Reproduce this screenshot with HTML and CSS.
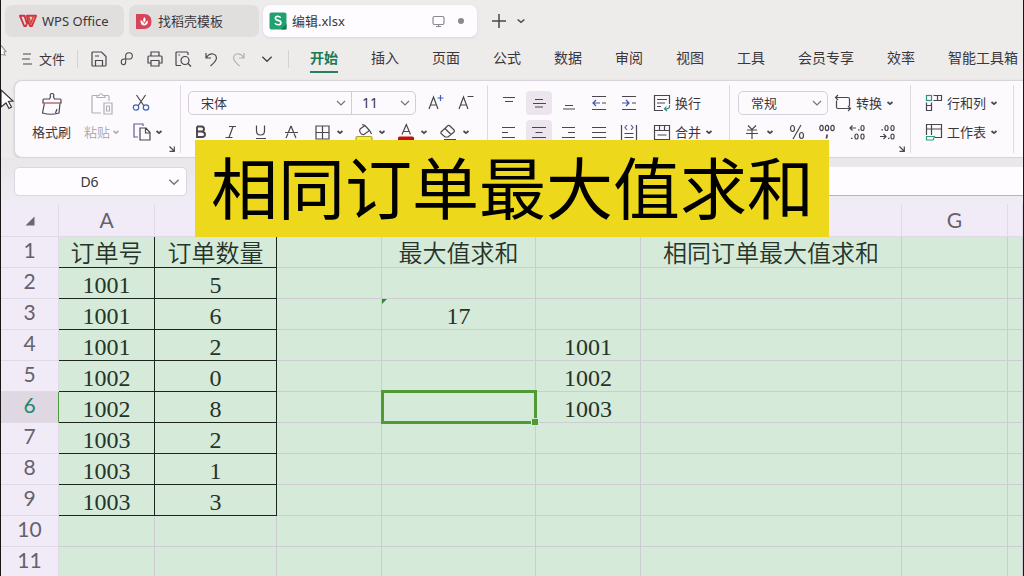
FILE: index.html
```html
<!DOCTYPE html>
<html lang="zh-CN">
<head>
<meta charset="utf-8">
<title>编辑.xlsx</title>
<link rel="stylesheet" href="styles.css">
</head>
<body>
<svg class="defs" aria-hidden="true">
  <symbol id="caret" viewBox="0 0 8 8"><path d="M1.5 3 L4 5.200 L6.5 3" stroke-width="1.7"/></symbol>
  <symbol id="chev" viewBox="0 0 12 12"><path d="M2 4 L6 8 L10 4"/></symbol>
  <symbol id="launch" viewBox="0 0 8 8"><path d="M1.5 1.5 L6 6 M6.3 1.5 V6.3 H1.5"/></symbol>
</svg>

<header class="tabs">
  <button class="tab tab-home"><svg width="18" height="14" viewBox="0 0 18 14"><path d="M1 1.8 H5.5 L7.8 9 L9 5.4 L7.8 1.8 H17 L13 12 H11 L9 7 L7 12 H5.2 Z" fill="none" stroke="#cf3341" stroke-width="1.9" stroke-linejoin="round"/><path d="M9.5 2 L11.8 9.5 L14.5 2" fill="none" stroke="#d9493b" stroke-width="1.7"/></svg><span>WPS Office</span></button>
  <button class="tab tab-store"><svg class="solid" width="16" height="17" viewBox="0 0 16 17"><path d="M0 1 H8 Q15.5 1 15.5 8.5 Q15.5 16 8 16 H0 Z" fill="#d8445a"/><path d="M8.500 4 Q6 6.500 8 9.500 Q11 8 8.500 4 M4.500 7 Q4 12.500 8.500 12.500 Q12 12 12 7.500 Q10 8 8.500 11 Q7 8 4.500 7" fill="#fff"/></svg><span>找稻壳模板</span></button>
  <button class="tab tab-file"><svg class="solid" width="18" height="18" viewBox="0 0 18 18"><rect x="0.500" y="0.500" width="17" height="17" rx="2" fill="#21a070"/><path d="M12 17.500 L17.500 12 V17.500 Z" fill="#12784f"/><path d="M11.700 5.800 Q10.500 4.300 8.800 4.300 Q6.400 4.400 6.400 6.300 Q6.500 8 9 8.400 Q11.900 8.900 11.900 10.800 Q11.700 12.700 9.200 12.700 Q7 12.700 5.900 11.100" fill="none" stroke="#fff" stroke-width="1.600"/></svg><span>编辑.xlsx</span>
    <svg class="screen" width="13" height="13" viewBox="0 0 13 13"><rect x="1" y="1.500" width="11" height="8" rx="1.500"/><path d="M6.500 9.500 V11.500 M4 11.500 H9"/></svg><i class="dot"></i></button>
  <button class="add" aria-label="新建"><svg width="16" height="16" viewBox="0 0 16 16"><path d="M8 1 V15 M1 8 H15" stroke-width="1.500"/></svg></button>
  <button class="add-more" aria-label="更多"><svg width="10" height="10" viewBox="0 0 8 8"><path d="M1.300 2.800 L4 5 L6.700 2.800"/></svg></button>
</header>

<nav class="menu">
  <button class="file"><svg width="12" height="14" viewBox="0 0 12 14"><path d="M2 2 H10 M1 7 H9 M2 12 H11"/></svg>文件</button>
  <div class="quick">
    <button aria-label="保存"><svg width="18" height="18" viewBox="0 0 18 18"><path d="M2 3 Q2 2 3 2 H11.500 L16 6.500 V15 Q16 16 15 16 H3 Q2 16 2 15 Z M5.500 16 V10.500 H12.500 V16 M5 6 H9"/></svg></button>
    <button aria-label="输出"><svg width="16" height="16" viewBox="0 0 18 18"><path d="M7.500 12.500 V5.500 Q7.500 2 11.300 2 Q15 2 15 5.500 Q15 9 11 9 H6 Q2.500 9 2.500 12.200 Q2.500 15.500 5 15.500 Q7.500 15.500 7.500 12.500"/></svg></button>
    <button aria-label="打印"><svg width="18" height="18" viewBox="0 0 18 18"><path d="M5 6 V2 H13 V6 M5 13 H2 V7 Q2 6 3 6 H15 Q16 6 16 7 V13 H13 M5 10.500 H13 V16 H5 Z"/></svg></button>
    <button aria-label="预览"><svg width="18" height="18" viewBox="0 0 18 18"><path d="M7 15.500 H3 Q2 15.500 2 14.500 V3 Q2 2 3 2 H13 Q14 2 14 3 V5 M4.500 5 H6"/><circle cx="11" cy="10.500" r="4"/><path d="M14 13.500 L17 16.500"/></svg></button>
    <button aria-label="撤销"><svg width="18" height="18" viewBox="0 0 18 18"><path d="M4 3 V8 H9 M4.500 7.500 Q7 3.500 11 4 Q15 5 14.300 9 Q14 11 8.500 16"/></svg></button>
    <button class="dim" aria-label="恢复"><svg width="18" height="18" viewBox="0 0 18 18"><path d="M14 3 V8 H9 M13.500 7.500 Q11 3.500 7 4 Q3 5 3.700 9 Q4 11 9.500 16"/></svg></button>
    <button aria-label="更多"><svg width="14" height="14" viewBox="0 0 12 12"><use href="#chev"/></svg></button>
  </div>
  <div class="ribbon-tabs">
    <button class="on">开始</button><button>插入</button><button>页面</button><button>公式</button><button>数据</button><button>审阅</button><button>视图</button><button>工具</button><button>会员专享</button><button>效率</button><button>智能工具箱</button>
  </div>
</nav>

<section class="ribbon">
  <div class="group clip">
    <button class="big"><svg width="24" height="24" viewBox="0 0 24 24"><path d="M3 8 Q3 7 4 7 H9.500 L10.500 5 Q9.500 1.500 12 1.500 Q14.500 1.500 13.500 5 L14.500 7 H20 Q21 7 21 8 V11 H3 Z M4.500 11 L2.500 21 Q11 23.500 19 21 L20 11 M15.500 21 L17 17"/><path d="M4 11 H20" stroke="#d98b8b"/></svg><span>格式刷</span></button>
    <button class="big dim"><svg width="24" height="24" viewBox="0 0 24 24"><path d="M7 3.500 H3 Q2 3.500 2 4.500 V20 Q2 21 3 21 H11 M15 3.500 H18 Q19 3.500 19 4.500 V9 M7 5.500 V3.500 H9 Q11 0 13 3.500 H15 V5.500 Z M14 11 H22 V22 H14 Z M16.500 14 H19.500 V19 H16.500 Z"/></svg><span>粘贴 <svg width="8" height="8"><use href="#caret"/></svg></span></button>
    <div class="stack">
      <button class="row" aria-label="剪切"><svg width="18" height="18" viewBox="0 0 18 18"><path d="M4.500 1 L12 12 M13.500 1 L6 12"/><g stroke="#3f62b5"><circle cx="4" cy="13.500" r="2.700"/><circle cx="14" cy="13.500" r="2.700"/></g></svg></button>
      <button class="row" aria-label="复制"><svg width="20" height="20" viewBox="0 0 20 20"><path d="M6 15 H2 V2 H11 V4" stroke="#5b5f9c"/><path d="M8 6 H14 L18 10.500 V18 H8 Z M13.500 6 V11 H18"/></svg><svg width="8" height="8"><use href="#caret"/></svg></button>
    </div>
    <svg class="launch" width="8" height="8"><use href="#launch"/></svg>
  </div>

  <div class="group font">
    <div class="line">
      <div class="combo"><label class="pick family"><select aria-label="字体"><option>宋体</option></select><svg width="12" height="12"><use href="#chev"/></svg></label><label class="pick size"><select aria-label="字号"><option>11</option></select><svg width="12" height="12"><use href="#chev"/></svg></label></div>
      <button class="ic" aria-label="增大字号"><svg width="18" height="18" viewBox="0 0 18 18"><path d="M2 15 L6.500 3 L11 15 M3.500 11 H9.500"/><path d="M13.500 1 V7 M10.500 4 H16.500" stroke="#3f62b5"/></svg></button>
      <button class="ic" aria-label="减小字号"><svg width="18" height="18" viewBox="0 0 18 18"><path d="M2 15 L6.500 3 L11 15 M3.500 11 H9.500 M10.500 2.500 H16.500"/></svg></button>
    </div>
    <div class="line">
      <button class="ic" aria-label="加粗"><svg width="18" height="18" viewBox="0 0 18 18"><path d="M5 3.500 H9.500 Q12 3.800 12 6 Q12 8.500 9.500 8.500 H5 M9.500 8.500 Q13 8.800 13 11.500 Q13 14 10 14 H5 V3.500" stroke-width="1.900"/></svg></button>
      <button class="ic" aria-label="倾斜"><svg width="18" height="18" viewBox="0 0 18 18"><path d="M7 3.500 H14 M3.500 14.500 H10.500 M11 3.500 L7 14.500"/></svg></button>
      <button class="ic" aria-label="下划线"><svg width="18" height="18" viewBox="0 0 18 18"><path d="M4.500 2.500 V8 Q4.500 12 8.500 12 Q12.500 12 12.500 8 V2.500 M4 15.500 H14"/></svg></button>
      <button class="ic" aria-label="删除线"><svg width="18" height="18" viewBox="0 0 18 18"><path d="M9 3 L6.500 9 M9 3 L11.500 9 M3 9.500 H16 M6 10.500 L4 15 M12 10.500 L14 15"/></svg></button>
      <button class="split" aria-label="边框"><svg width="18" height="18" viewBox="0 0 18 18"><path d="M3 3 H16 V16 H3 Z M9.500 3 V16 M3 9.500 H16"/></svg><svg width="8" height="8"><use href="#caret"/></svg></button>
      <button class="split" aria-label="填充颜色"><svg width="18" height="20" viewBox="0 0 18 20"><path d="M5 7 L10 3.500 L14.500 8.500 L9 12.500 Q7 13 5.500 11 Q4 9 5 7 M10 3.500 L7 2.500 M15 9 L16.500 12"/><rect x="1" y="14.500" width="16" height="5" rx="1.500" fill="#f6f03a" stroke="#a8a22e"/></svg><svg width="8" height="8"><use href="#caret"/></svg></button>
      <button class="split" aria-label="字体颜色"><svg width="18" height="20" viewBox="0 0 18 20"><path d="M5 12.500 L9.300 2.500 L13.500 12.500 M6.500 9.500 H12"/><rect x="1" y="14.500" width="16" height="5" rx="1.500" fill="#c4100f" stroke="none"/></svg><svg width="8" height="8"><use href="#caret"/></svg></button>
      <button class="split" aria-label="清除"><svg width="18" height="18" viewBox="0 0 18 18"><path d="M2 9 L9 2.500 Q10 2 11 3 L15 7 Q16 8 15 9 L9 14 H6 L2 10.500 Z M6 5.500 L12 11.500 M5 16.500 H17"/></svg><svg width="8" height="8"><use href="#caret"/></svg></button>
    </div>
  </div>

  <div class="group align">
    <div class="line">
      <button class="ic" aria-label="顶端对齐"><svg width="18" height="18" viewBox="0 0 18 18"><path d="M3 3.500 H15 M5 7.500 H13"/></svg></button>
      <button class="ic on" aria-label="垂直居中"><svg width="18" height="18" viewBox="0 0 18 18"><path d="M5 5.500 H13 M3 9.500 H16 M5 13 H13"/></svg></button>
      <button class="ic" aria-label="底端对齐"><svg width="18" height="18" viewBox="0 0 18 18"><path d="M5 11.500 H13 M3 15 H15"/></svg></button>
      <button class="ic" aria-label="减少缩进"><svg width="18" height="18" viewBox="0 0 18 18"><path d="M2 2.500 H16 M2 15.500 H16 M12 9 H16"/><path d="M10 9 H3 M6 6 L3 9 L6 12" stroke="#3f4fb5"/></svg></button>
      <button class="ic" aria-label="增加缩进"><svg width="18" height="18" viewBox="0 0 18 18"><path d="M2 2.500 H16 M2 15.500 H16 M12 9 H16"/><path d="M2 9 H9 M6 6 L9 9 L6 12" stroke="#3f4fb5"/></svg></button>
      <button class="text"><svg width="18" height="18" viewBox="0 0 18 18"><path d="M10 16.500 H1.500 V1.500 H16.500 V10 M4 5.500 H14 M4 9 H12 M4 12.500 H8"/><path d="M16.500 11 V13 Q16 15 12 15 M13.500 12.500 L11.500 15 L14 17" stroke="#3a8a80"/></svg>换行</button>
    </div>
    <div class="line">
      <button class="ic" aria-label="左对齐"><svg width="18" height="18" viewBox="0 0 18 18"><path d="M2 4.500 H15 M2 9.500 H8 M2 14.500 H15"/></svg></button>
      <button class="ic on" aria-label="居中"><svg width="18" height="18" viewBox="0 0 18 18"><path d="M2 4.500 H16 M5.500 9.500 H12.500 M2 14.500 H16"/></svg></button>
      <button class="ic" aria-label="右对齐"><svg width="18" height="18" viewBox="0 0 18 18"><path d="M2 4.500 H15 M8 9.500 H15 M2 14.500 H15"/></svg></button>
      <button class="ic" aria-label="两端对齐"><svg width="18" height="18" viewBox="0 0 18 18"><path d="M2 4.500 H16 M2 9.500 H16 M2 14.500 H16"/></svg></button>
      <button class="ic" aria-label="分散对齐"><svg width="18" height="18" viewBox="0 0 18 18"><path d="M1.500 2 V17 M16.500 2 V17 M4.500 10.500 H13.500 M4.500 14.500 H13.500"/><path d="M7 2 L5 4.500 L7 7 M11 2 L13 4.500 L11 7" stroke="#6a55a5"/></svg></button>
      <button class="text"><svg width="18" height="18" viewBox="0 0 18 18"><path d="M1.500 2.500 H16.500 V16.500 H1.500 Z M1.500 7.500 H16.500 M6.500 2.500 V7.500 M11.500 2.500 V7.500 M4.500 12 H13.500"/></svg>合并<svg width="8" height="8"><use href="#caret"/></svg></button>
    </div>
  </div>

  <div class="group number">
    <div class="line">
      <label class="pick format"><select aria-label="数字格式"><option>常规</option></select><svg width="12" height="12"><use href="#chev"/></svg></label>
      <button class="text"><svg width="18" height="18" viewBox="0 0 18 18"><path d="M4 1 L1.500 3.500 L4 6 M1.500 3.500 H14 Q15.500 3.500 15.500 5 V12 M2.500 6.500 V13 Q2.500 14.500 4 14.500 H16.500 M14 12 L16.500 14.500 L14 17"/></svg>转换<svg width="8" height="8"><use href="#caret"/></svg></button>
    </div>
    <div class="line">
      <button class="split money" aria-label="货币"><svg width="18" height="18" viewBox="0 0 18 18"><path d="M5 2.500 L9 6.500 L13 2.500 M4 7 H14 M3 10.500 H15 M9 7 V16"/></svg><svg width="8" height="8"><use href="#caret"/></svg></button>
      <button class="ic" aria-label="百分比"><svg width="18" height="18" viewBox="0 0 18 18"><ellipse cx="4.500" cy="5.500" rx="2" ry="3"/><ellipse cx="13.500" cy="12.500" rx="2" ry="3"/><path d="M13 2 L5 16"/></svg></button>
      <button class="ic" aria-label="千位分隔"><svg width="18" height="18" viewBox="0 0 18 18"><ellipse cx="3.500" cy="5" rx="1.700" ry="2.700"/><ellipse cx="9" cy="5" rx="1.700" ry="2.700"/><ellipse cx="14.500" cy="5" rx="1.700" ry="2.700"/><path d="M9 11.500 V13 L8.300 15.500" stroke-width="1.700"/></svg></button>
      <button class="ic" aria-label="增加小数位"><svg width="18" height="18" viewBox="0 0 18 18"><path d="M8 5 H2 M4.500 2.500 L2 5 L4.500 7.500 M10 6.800 H11.500 M3 15.300 H4.500"/><ellipse cx="14.500" cy="5" rx="1.600" ry="2.500"/><ellipse cx="8.500" cy="13.500" rx="1.600" ry="2.500"/><ellipse cx="14.500" cy="13.500" rx="1.600" ry="2.500"/></svg></button>
      <button class="ic" aria-label="减少小数位"><svg width="18" height="18" viewBox="0 0 18 18"><path d="M2 13.500 H8 M5.500 11 L8 13.500 L5.500 16 M3.500 6.800 H5 M10 15.300 H11.500"/><ellipse cx="8.500" cy="5" rx="1.600" ry="2.500"/><ellipse cx="14.500" cy="5" rx="1.600" ry="2.500"/><ellipse cx="14.500" cy="13.500" rx="1.600" ry="2.500"/></svg></button>
    </div>
    <svg class="launch" width="8" height="8"><use href="#launch"/></svg>
  </div>

  <div class="group cells">
    <div class="line"><button class="text"><svg width="18" height="18" viewBox="0 0 18 18"><path d="M8.500 1.500 H16.500 V6.500 H8.500 M12.500 1.500 V6.500 M1.500 8.500 V16.500 H6.500 V8.500 M1.500 11.500 H6.500"/><rect x="1.500" y="1.500" width="5" height="5" stroke="#2f8f80"/></svg>行和列<svg width="8" height="8"><use href="#caret"/></svg></button></div>
    <div class="line"><button class="text"><svg width="18" height="18" viewBox="0 0 18 18"><path d="M1.500 12 V1.500 H16.500 V14.500 H10 M1.500 6 H16.500 M6.500 1.500 V12"/><path d="M1.500 13.500 H9.500 L8 17 H1.500 Z" stroke="#2f9f80"/></svg>工作表<svg width="8" height="8"><use href="#caret"/></svg></button></div>
  </div>
</section>

<div class="formula">
  <label class="name-box"><input aria-label="名称框" value="D6"><svg width="14" height="14" viewBox="0 0 12 12"><use href="#chev"/></svg></label>
  <input class="fx" aria-label="编辑栏">
</div>

<main>
<table class="sheet">
  <colgroup><col class="w-head"><col class="w-a"><col class="w-b"><col class="w-c"><col class="w-d"><col class="w-c"><col class="w-f"><col class="w-g"><col></colgroup>
  <thead><tr><th><svg width="10" height="10" viewBox="0 0 10 10"><path d="M9.500 0.500 V9.500 H0.500 Z" fill="#6b6670" stroke="none"/></svg></th><th>A</th><th></th><th></th><th></th><th></th><th></th><th>G</th><th></th></tr></thead>
  <tbody>
    <tr><th>1</th><td class="b">订单号</td><td class="b">订单数量</td><td></td><td>最大值求和</td><td></td><td>相同订单最大值求和</td><td></td><td></td></tr>
    <tr><th>2</th><td class="b">1001</td><td class="b">5</td><td></td><td></td><td></td><td></td><td></td><td></td></tr>
    <tr><th>3</th><td class="b">1001</td><td class="b">6</td><td></td><td class="flag">17</td><td></td><td></td><td></td><td></td></tr>
    <tr><th>4</th><td class="b">1001</td><td class="b">2</td><td></td><td></td><td>1001</td><td></td><td></td><td></td></tr>
    <tr><th>5</th><td class="b">1002</td><td class="b">0</td><td></td><td></td><td>1002</td><td></td><td></td><td></td></tr>
    <tr class="current"><th>6</th><td class="b">1002</td><td class="b">8</td><td></td><td class="selected"></td><td>1003</td><td></td><td></td><td></td></tr>
    <tr><th>7</th><td class="b">1003</td><td class="b">2</td><td></td><td></td><td></td><td></td><td></td><td></td></tr>
    <tr><th>8</th><td class="b">1003</td><td class="b">1</td><td></td><td></td><td></td><td></td><td></td><td></td></tr>
    <tr><th>9</th><td class="b">1003</td><td class="b">3</td><td></td><td></td><td></td><td></td><td></td><td></td></tr>
    <tr><th>10</th><td></td><td></td><td></td><td></td><td></td><td></td><td></td><td></td></tr>
    <tr><th>11</th><td></td><td></td><td></td><td></td><td></td><td></td><td></td><td></td></tr>
  </tbody>
</table>
</main>

<h1 class="banner">相同订单最大值求和</h1>
<svg class="pointer" width="14" height="22" viewBox="0 0 14 22"><path d="M0 1 L12 12 L7.500 12.500 L10.500 18 L8 19.500 L5 14 L0 18 Z" fill="#fff" stroke="#333"/></svg>
<svg class="pointer-ghost" width="6" height="11" viewBox="0 0 6 11"><path d="M0 0.500 L5 6.500 L3 7 L4 10 L0 9.500" fill="#fff" stroke="#999"/></svg>
</body>
</html>
```
FILE: styles.css
```css
* { box-sizing: border-box; }
html { overflow: hidden; background: #eeecea; }
body {
  position: relative;
  margin: 0;
  min-height: 100vh;
  overflow: hidden;
  border: solid #1a1618;
  border-width: 0 1px;
  background: #eeecea;
  color: #3a363c;
  font: 13px/20px "Noto Sans", "Noto Sans CJK SC", sans-serif;
}
.defs { display: none; }
button, input, select { margin: 0; padding: 0; border: 0; background: none; color: inherit; font: inherit; }
button { display: flex; align-items: center; white-space: nowrap; }
svg { display: block; flex: none; fill: none; stroke: #4a464d; stroke-width: 1.2; }
.solid { stroke: none; }
.dim { color: #b3aeb6; }
.dim svg { stroke: #b3aeb6; }

.tabs { display: flex; align-items: center; padding: 5px 0 3px 4px; }
.tab { height: 32px; border-radius: 7px; background: #e0dfde; }
.tab-home { width: 119px; padding-left: 14px; gap: 5px; margin-right: 5px; }
.tab-store { width: 130px; padding-left: 7px; gap: 6px; margin-right: 4px; }
.tab-file { width: 214px; padding: 0 13px 0 6px; gap: 5px; background: #fefcff; box-shadow: 0 1px 3px #d9d2e2; }
.screen { margin-left: auto; stroke: #8c8790; }
.dot { width: 6px; height: 6px; margin-left: 8px; border-radius: 50%; background: #8c8790; }
.add { margin-left: 14px; }
.add-more { margin-left: 9px; }

.menu { display: flex; align-items: center; height: 37px; white-space: nowrap; }
.file { gap: 6px; margin-left: 20px; }
.quick { display: flex; align-items: center; margin-left: 12px; padding: 0 7px; border: solid #d5d2d3; border-width: 0 1px; }
.quick button { width: 28px; height: 18px; justify-content: center; }
.ribbon-tabs { display: flex; gap: 33px; margin-left: 21px; font-size: 14px; }
.ribbon-tabs button { padding: 3px 0; border-bottom: 2px solid transparent; }
.ribbon-tabs .on { border-color: #268060; color: #1a7a54; font-weight: bold; }

.ribbon {
  display: flex;
  margin: 3px 0 0 13px;
  border: 1px solid #d9d4dc;
  border-right: 0;
  border-radius: 8px 0 0 8px;
  background: #fdfafe;
  box-shadow: 0 1px 3px #cfcbd4;
}
.group { position: relative; flex: none; margin: 4px 0; padding: 6px 0 9px; border-right: 1px solid #e2d8e4; }
.line { display: flex; height: 24px; align-items: center; }
.line + .line { margin-top: 5px; }
.launch { position: absolute; right: 4px; bottom: 0; }

.clip { display: flex; width: 166px; padding-left: 17px; }
.big { flex-direction: column; justify-content: space-between; padding-top: 1px; }
.big + .big { margin-left: 13px; }
.big span { display: flex; align-items: center; gap: 2px; height: 24px; }
.stack { display: flex; flex-direction: column; gap: 5px; margin-left: 12px; }
.row { height: 24px; gap: 3px; }

.font { width: 307px; padding-left: 5px; }
.combo { display: flex; margin: 0 5px 0 2px; border: 1px solid #d3cdd8; border-radius: 5px; }
.pick { position: relative; display: block; }
.pick select { width: 100%; height: 22px; padding-left: 12px; appearance: none; outline: 0; }
.pick svg { position: absolute; right: 4px; top: 5px; pointer-events: none; stroke: #77727b; }
.family { width: 162px; }
.size { width: 64px; border-left: 1px solid #d3cdd8; font-size: 14px; }
.size select { padding-left: 10px; }
.ic { flex: none; width: 30px; height: 24px; justify-content: center; }
.align .on { width: 26px; margin: 0 2px; border-radius: 4px; background: #ece5ee; }
.split { flex: none; width: 42px; height: 24px; padding-left: 7px; gap: 5px; }
.align { width: 242px; padding-left: 6px; }
.text { gap: 4px; padding-left: 9px; }
.number { width: 181px; padding-left: 8px; }
.number .text { padding-left: 6px; }
.format { width: 90px; border: 1px solid #d8cedb; border-radius: 5px; }
.money { width: 44px; padding-left: 5px; gap: 5px; }
.cells { width: 103px; padding-left: 5px; }

.formula { display: flex; gap: 9px; padding: 9px 0 8px 13px; background: linear-gradient(#e9e7e9, #f0ecf6); }
.name-box { position: relative; width: 173px; border: 1px solid #dcd6e0; border-radius: 5px; background: #fefcff; }
.name-box input { width: 100%; height: 27px; padding: 0 22px 1px 0; text-align: center; font-size: 14px; }
.name-box svg { position: absolute; right: 5px; top: 7px; stroke: #77727b; }
.fx { flex: 1; min-width: 0; background: #fefcff; border-bottom: 1px solid #bdb1c3; }

.sheet { width: 100%; table-layout: fixed; border-collapse: separate; border-spacing: 0; background: #d5ead8; }
.w-head { width: 58px; }
.w-a { width: 96px; }
.w-b { width: 122px; }
.w-c { width: 105px; }
.w-d { width: 154px; }
.w-f { width: 261px; }
.w-g { width: 106px; }
.sheet th, .sheet td { height: 31px; padding: 0; border: solid #cdccd2; border-width: 0 1px 1px 0; text-align: center; white-space: nowrap; }
.sheet th { padding-bottom: 4px; background: #f0ebf7; border-color: #e0d9e6; color: #66616b; font: 21px/26px Lato, sans-serif; }
.sheet thead th { height: 33px; padding-bottom: 0; }
.sheet thead svg { margin: 2px auto 0; }
.sheet td { padding-top: 4px; color: #26332a; font: 24px/26px "Liberation Serif", "Noto Sans CJK SC", serif; font-weight: 350; }
.sheet .b { border-color: #1c241e; }
.sheet .current th { background: #dfd8e2; border-right: 1px solid #4f9a3a; color: #23876a; }
.flag, .selected { position: relative; }
.flag::before { content: ""; position: absolute; left: 0; top: 0; width: 5px; height: 5px; background: #2c8a3a; clip-path: polygon(0 0, 100% 0, 0 100%); }
.selected::before { content: ""; position: absolute; inset: -2px -2px -2px -1px; border: 3px solid #4f9a35; }
.selected::after { content: ""; position: absolute; right: -3px; bottom: -3px; width: 6px; height: 6px; background: #4f9a35; outline: 1px solid #d5ead8; }

.banner {
  position: absolute;
  left: 194px;
  top: 140px;
  margin: 0;
  padding: 0 15px 8px 16px;
  background: #edd81b;
  color: #000;
  font: 400 67px/89px "Noto Sans CJK SC", sans-serif;
  white-space: nowrap;
}
.pointer { position: absolute; left: 0; top: 89px; }
.pointer-ghost { position: absolute; left: 0; top: 45px; }
```
